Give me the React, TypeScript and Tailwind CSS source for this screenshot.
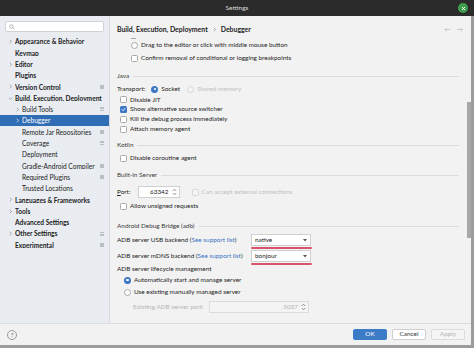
import React from 'react';

const font = { fontFamily: 'Lato, "Noto Sans", sans-serif' };

function Check({ checked = false, disabled = false }: { checked?: boolean; disabled?: boolean }) {
  if (checked) {
    return (
      <span className="flex h-[7px] w-[7px] shrink-0 items-center justify-center rounded-[1.5px] bg-[#3c78c6]">
        <svg width="5" height="5" viewBox="0 0 10 10">
          <path d="M2 5.2 L4.2 7.4 L8.2 2.8" fill="none" stroke="#fff" strokeWidth="1.8" strokeLinecap="round" strokeLinejoin="round" />
        </svg>
      </span>
    );
  }
  return (
    <span
      className={`h-[7px] w-[7px] shrink-0 rounded-[1.5px] border ${
        disabled ? 'border-[#d6d6d6] bg-[#f4f4f4]' : 'border-[#a9a9a9] bg-white'
      }`}
    />
  );
}

function Radio({ on = false, disabled = false }: { on?: boolean; disabled?: boolean }) {
  if (on) {
    return (
      <span className="flex h-[7px] w-[7px] shrink-0 items-center justify-center rounded-full bg-[#3c78c6]">
        <span className="h-[2.5px] w-[2.5px] rounded-full bg-white" />
      </span>
    );
  }
  return (
    <span
      className={`h-[7px] w-[7px] shrink-0 rounded-full border ${
        disabled ? 'border-[#d6d6d6] bg-[#f4f4f4]' : 'border-[#a9a9a9] bg-white'
      }`}
    />
  );
}

function Section({ title, className = '' }: { title: string; className?: string }) {
  return (
    <div className={`flex h-[14px] items-center gap-[4px] pr-[12px] ${className}`}>
      <span className="text-[#3a3a3a]">{title}</span>
      <span className="h-px flex-1 bg-[#dcdcdc]" />
    </div>
  );
}

function Spinner() {
  return (
    <svg width="5" height="8" viewBox="0 0 5 8" className="shrink-0">
      <path d="M0.8 3 L2.5 1.2 L4.2 3" fill="none" stroke="#777" strokeWidth="0.8" />
      <path d="M0.8 5 L2.5 6.8 L4.2 5" fill="none" stroke="#777" strokeWidth="0.8" />
    </svg>
  );
}

type NavItem = { label: string; level: number; arrow?: 'right' | 'down'; bold?: boolean; icon?: boolean; selected?: boolean };

const nav: NavItem[] = [
  { label: 'Appearance & Behavior', level: 0, arrow: 'right', bold: true },
  { label: 'Keymap', level: 0, bold: true },
  { label: 'Editor', level: 0, arrow: 'right', bold: true },
  { label: 'Plugins', level: 0, bold: true },
  { label: 'Version Control', level: 0, arrow: 'right', bold: true, icon: true },
  { label: 'Build, Execution, Deployment', level: 0, arrow: 'down', bold: true },
  { label: 'Build Tools', level: 1, arrow: 'right', icon: true },
  { label: 'Debugger', level: 1, arrow: 'right', selected: true },
  { label: 'Remote Jar Repositories', level: 1, icon: true },
  { label: 'Coverage', level: 1, icon: true },
  { label: 'Deployment', level: 1 },
  { label: 'Gradle-Android Compiler', level: 1, icon: true },
  { label: 'Required Plugins', level: 1, icon: true },
  { label: 'Trusted Locations', level: 1 },
  { label: 'Languages & Frameworks', level: 0, arrow: 'right', bold: true },
  { label: 'Tools', level: 0, arrow: 'right', bold: true },
  { label: 'Advanced Settings', level: 0, bold: true },
  { label: 'Other Settings', level: 0, arrow: 'right', bold: true, icon: true },
  { label: 'Experimental', level: 0, bold: true, icon: true },
];

function Chevron({ dir, color }: { dir: 'right' | 'down'; color: string }) {
  return (
    <svg width="5" height="5" viewBox="0 0 10 10">
      {dir === 'right' ? (
        <path d="M3.5 1.5 L7 5 L3.5 8.5" fill="none" stroke={color} strokeWidth="1.4" />
      ) : (
        <path d="M1.5 3.5 L5 7 L8.5 3.5" fill="none" stroke={color} strokeWidth="1.4" />
      )}
    </svg>
  );
}

function Sidebar() {
  return (
    <div className="flex w-[110px] shrink-0 flex-col border-r border-[#d5d9de] bg-[#e9edf1] text-[6.6px]">
      <div className="px-[5px] pt-[5px]">
        <div className="flex h-[11px] items-center rounded-[2px] border border-[#cfd3d8] bg-white pl-[3px]">
          <svg width="6" height="6" viewBox="0 0 10 10">
            <circle cx="4" cy="4" r="2.8" fill="none" stroke="#9a9a9a" strokeWidth="1.2" />
            <path d="M6 6 L8.8 8.8" stroke="#9a9a9a" strokeWidth="1.2" />
          </svg>
        </div>
      </div>
      <div className="mt-[4px] flex flex-col">
        {nav.map((n) => (
          <div
            key={n.label}
            className={`flex h-[11.3px] items-center pr-[5px] ${n.selected ? 'bg-[#2f6db5] text-white' : 'text-[#222]'}`}
          >
            <span className={`flex w-[6px] shrink-0 justify-center ${n.level === 0 ? 'ml-[7px]' : 'ml-[14px]'}`}>
              {n.arrow && <Chevron dir={n.arrow} color={n.selected ? '#fff' : '#8a8a8a'} />}
            </span>
            <span className={`ml-[2px] flex-1 truncate ${n.bold ? 'font-bold' : ''}`}>{n.label}</span>
            {n.icon && (
              <span className="grid h-[4px] w-[4px] grid-cols-2 gap-[0.5px] opacity-60">
                <span className="bg-[#9aa0a6]" />
                <span className="bg-[#9aa0a6]" />
                <span className="bg-[#9aa0a6]" />
                <span className="bg-[#9aa0a6]" />
              </span>
            )}
          </div>
        ))}
      </div>
    </div>
  );
}

function Combo({ value }: { value: string }) {
  return (
    <div className="flex flex-col">
      <div className="flex h-[12px] w-[60px] items-center justify-between border border-[#d0d0d0] bg-white pl-[3px] pr-[3px] text-[#222]">
        <span>{value}</span>
        <svg width="4" height="3" viewBox="0 0 8 6">
          <path d="M0 0 L8 0 L4 5 Z" fill="#555" />
        </svg>
      </div>
      <span className="mt-[1px] h-[2px] w-[61px] rounded-full bg-[#d9536b]" />
    </div>
  );
}

function Content() {
  return (
    <div className="relative flex flex-1 flex-col">
      <div className="flex h-[17px] items-end justify-between pl-[7px] pr-[8px]">
        <div className="flex items-center gap-[4px] text-[6.9px] font-bold text-[#222]">
          <span>Build, Execution, Deployment</span>
          <Chevron dir="right" color="#888" />
          <span>Debugger</span>
        </div>
        <div className="flex items-center gap-[6px] text-[#b0b0b0]">
          <span>←</span>
          <span>→</span>
        </div>
      </div>
      <div className="flex-1 overflow-hidden pl-[7px] text-[#222]">
        <div className="flex h-[6px] items-end pl-[14px]">
          <span className="h-[2px] w-[5px] border-b border-[#a9a9a9]" />
        </div>
        <div className="flex h-[12px] items-center gap-[3px] pl-[14px]">
          <Radio />
          <span>Drag to the editor or click with middle mouse button</span>
        </div>
        <div className="flex h-[14px] items-center gap-[3px] pl-[14px]">
          <Check />
          <span>Confirm removal of conditional or logging breakpoints</span>
        </div>

        <Section title="Java" className="mt-[4px]" />
        <div className="flex h-[12px] items-center">
          <span>Transport:</span>
          <span className="ml-[6px] flex items-center gap-[3px]">
            <Radio on />
            <span>Socket</span>
          </span>
          <span className="ml-[7px] flex items-center gap-[3px] text-[#c0c0c0]">
            <Radio disabled />
            <span>Shared memory</span>
          </span>
        </div>
        <div className="flex h-[9.5px] items-center gap-[3px] pl-[3px]">
          <Check />
          <span>Disable JIT</span>
        </div>
        <div className="flex h-[10px] items-center gap-[3px] pl-[3px]">
          <Check checked />
          <span>Show alternative source switcher</span>
        </div>
        <div className="flex h-[10px] items-center gap-[3px] pl-[3px]">
          <Check />
          <span>Kill the debug process immediately</span>
        </div>
        <div className="flex h-[9.5px] items-center gap-[3px] pl-[3px]">
          <Check />
          <span>Attach memory agent</span>
        </div>

        <Section title="Kotlin" className="mt-[4px]" />
        <div className="flex h-[12px] items-center gap-[3px] pl-[3px]">
          <Check />
          <span>Disable coroutine agent</span>
        </div>

        <Section title="Built-in Server" className="mt-[4px]" />
        <div className="mt-[2px] flex h-[16px] items-center">
          <span>
            <span className="underline">P</span>ort:
          </span>
          <div className="ml-[7px] flex h-[12px] w-[42px] items-center justify-end gap-[3px] border border-[#d0d0d0] bg-white pr-[2px]">
            <span>63342</span>
            <Spinner />
          </div>
          <span className="ml-[12px] flex items-center gap-[3px] text-[#c0c0c0]">
            <Check disabled />
            <span>Can accept external connections</span>
          </span>
        </div>
        <div className="flex h-[12px] items-center gap-[3px] pl-[3px]">
          <Check />
          <span>Allow unsigned requests</span>
        </div>

        <Section title="Android Debug Bridge (adb)" className="mt-[7px]" />
        <div className="mt-[1px] flex items-start">
          <span className="flex h-[12px] w-[134px] items-center">
            ADB server USB backend (<span className="text-[#3a74c2]">See support list</span>)
          </span>
          <Combo value="native" />
        </div>
        <div className="mt-[1px] flex items-start">
          <span className="flex h-[12px] w-[134px] items-center">
            ADB server mDNS backend (<span className="text-[#3a74c2]">See support list</span>)
          </span>
          <Combo value="bonjour" />
        </div>
        <div className="flex h-[9px] items-center">ADB server lifecycle management</div>
        <div className="flex h-[12px] items-center gap-[3px] pl-[7px]">
          <Radio on />
          <span>Automatically start and manage server</span>
        </div>
        <div className="flex h-[12px] items-center gap-[3px] pl-[7px]">
          <Radio />
          <span>Use existing manually managed server</span>
        </div>
        <div className="mt-[2px] flex h-[14px] items-center pl-[16px] text-[#b5b5b5]">
          <span className="w-[76px]">Existing ADB server port:</span>
          <div className="flex h-[12px] w-[100px] items-center justify-end gap-[3px] border border-[#dcdcdc] bg-[#f4f4f4] pr-[2px]">
            <span>5037</span>
            <Spinner />
          </div>
        </div>
      </div>
      <div className="absolute right-0 top-[86px] h-[136px] w-[4px] bg-[#a8a8a8]" />
    </div>
  );
}

export default function App() {
  return (
    <div className="h-[348px] w-[474px] overflow-hidden bg-[#2b2b2b] text-[6.4px] leading-none" style={font}>
      <div className="relative flex h-[16px] items-center justify-center text-[6.5px] text-[#dcdcdc]">
        <span>Settings</span>
        <span className="absolute right-[6px] top-[3px] flex h-[10px] w-[10px] items-center justify-center rounded-full bg-[#3f9e4b]">
          <svg width="5" height="5" viewBox="0 0 10 10">
            <path d="M2 2 L8 8 M8 2 L2 8" stroke="#fff" strokeWidth="2" />
          </svg>
        </span>
      </div>
      <div className="flex h-[332px] flex-col border-b-[3px] border-r-[3px] border-[#9c9c9c] bg-[#f2f2f2]">
        <div className="flex flex-1 overflow-hidden">
          <Sidebar />
          <Content />
        </div>
        <div className="flex h-[22px] shrink-0 items-center border-t border-[#dcdcdc] pl-[7px] pr-[6px]">
          <span className="flex h-[10px] w-[10px] items-center justify-center rounded-full border border-[#9a9a9a] text-[6px] text-[#555]">
            ?
          </span>
          <div className="ml-auto flex gap-[5px]">
            <button className="h-[11px] w-[34px] rounded-[2px] bg-[#3c7cc7] text-white">OK</button>
            <button className="h-[11px] w-[34px] rounded-[2px] border border-[#cfcfcf] bg-white text-[#333]">Cancel</button>
            <button className="h-[11px] w-[34px] rounded-[2px] border border-[#dcdcdc] bg-[#f5f5f5] text-[#b5b5b5]">Apply</button>
          </div>
        </div>
      </div>
    </div>
  );
}
